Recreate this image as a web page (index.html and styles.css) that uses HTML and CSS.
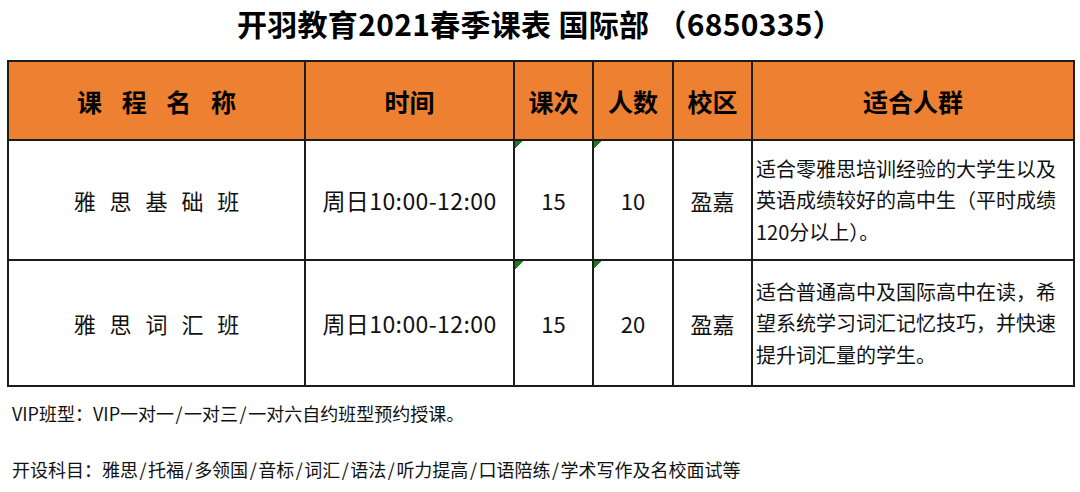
FILE: index.html
```html
<!DOCTYPE html>
<html lang="zh-CN">
<head>
<meta charset="utf-8">
<title>开羽教育2021春季课表</title>
<link rel="stylesheet" href="styles.css">
</head>
<body>
<div class="page">
  <h1 class="title">开羽教育2021春季课表 国际部 （6850335）</h1>
  <table class="schedule">
    <colgroup>
      <col class="c-name"><col class="c-time"><col class="c-num"><col class="c-num2"><col class="c-num"><col class="c-desc">
    </colgroup>
    <thead>
      <tr>
        <th class="spaced">课 程 名 称</th>
        <th>时间</th>
        <th>课次</th>
        <th>人数</th>
        <th>校区</th>
        <th>适合人群</th>
      </tr>
    </thead>
    <tbody>
      <tr class="row1">
        <td class="spaced-data">雅 思 基 础 班</td>
        <td class="time">周日10:00-12:00</td>
        <td class="flag">15</td>
        <td class="flag">10</td>
        <td>盈嘉</td>
        <td class="desc">适合零雅思培训经验的大学生以及<br>英语成绩较好的高中生（平时成绩<br>120分以上）。</td>
      </tr>
      <tr class="row2">
        <td class="spaced-data">雅 思 词 汇 班</td>
        <td class="time">周日10:00-12:00</td>
        <td class="flag">15</td>
        <td class="flag">20</td>
        <td>盈嘉</td>
        <td class="desc">适合普通高中及国际高中在读，希<br>望系统学习词汇记忆技巧，并快速<br>提升词汇量的学生。</td>
      </tr>
    </tbody>
  </table>
  <div class="notes">
    <p class="note">VIP班型：VIP一对一<span class="sl">/</span>一对三<span class="sl">/</span>一对六自约班型预约授课。</p>
    <p class="note">开设科目：雅思<span class="sl">/</span>托福<span class="sl">/</span>多领国<span class="sl">/</span>音标<span class="sl">/</span>词汇<span class="sl">/</span>语法<span class="sl">/</span>听力提高<span class="sl">/</span>口语陪练<span class="sl">/</span>学术写作及名校面试等</p>
  </div>
</div>
</body>
</html>
```

FILE: styles.css
```css
html, body {
  margin: 0;
  padding: 0;
  background: #ffffff;
}

body {
  font-family: "Noto Sans CJK SC", "Noto Sans", sans-serif;
  color: #111111;
}

.page {
  width: 1080px;
  height: 492px;
  padding-left: 7px;
  box-sizing: border-box;
  overflow: hidden;
}

.title {
  margin: 0;
  height: 60px;
  line-height: 46px;
  font-size: 30px;
  font-weight: 700;
  text-align: center;
  padding-right: 7px;
  color: #000;
  letter-spacing: 0.3px;
}

.schedule {
  border-collapse: collapse;
  table-layout: fixed;
  width: 1066px;
}

.c-name { width: 297px; }
.c-time { width: 209px; }
.c-num { width: 79px; }
.c-num2 { width: 80px; }
.c-desc { width: 322px; }

.schedule th,
.schedule td {
  border: 2px solid #1c1c1c;
  padding: 0;
  text-align: center;
  vertical-align: middle;
}

.schedule th {
  background: #ee8131;
  height: 77px;
  font-size: 25px;
  font-weight: 700;
  color: #000;
}

.schedule th.spaced {
  word-spacing: 14px;
}

.schedule td {
  font-size: 22px;
  color: #111;
}

.row1 td { height: 118px; }
.row2 td { height: 124px; }

.schedule td.spaced-data {
  word-spacing: 9px;
}

.schedule td.time {
  font-size: 23px;
  letter-spacing: 0.4px;
}

.schedule td.flag {
  background-image: linear-gradient(to bottom right, #1f7a1f 50%, transparent 50%);
  background-size: 8px 8px;
  background-repeat: no-repeat;
  background-position: 0 0;
}

.schedule td.desc {
  text-align: left;
  font-size: 20px;
  line-height: 31.5px;
  padding-left: 3px;
}

.notes {
  padding-left: 5px;
}

.note {
  margin: 0;
  font-size: 18px;
  line-height: 28px;
  color: #111;
}

.sl {
  padding: 0 1.5px;
}

.note:first-child {
  margin-top: 12px;
}

.note + .note {
  margin-top: 28px;
}
```
